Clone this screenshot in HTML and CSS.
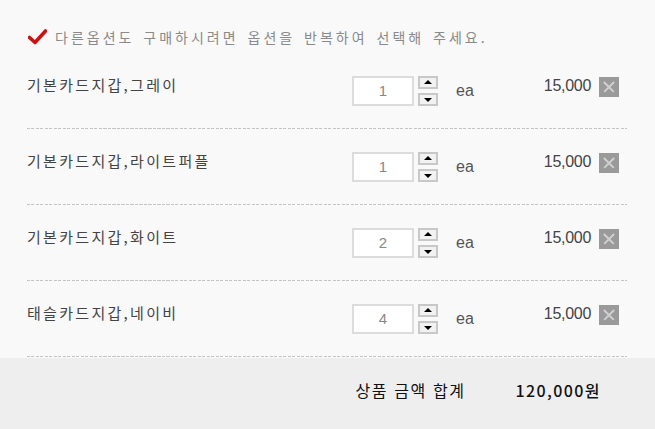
FILE: index.html
```html
<!DOCTYPE html>
<html lang="ko">
<head>
<meta charset="utf-8">
<link rel="stylesheet" href="styles.css">
</head>
<body>
<div class="page">
  <div class="notice">
    <svg class="check" width="19" height="16" viewBox="0 0 19 16"><path d="M1.5 8.5 L7 13.5 L17.5 2" fill="none" stroke="#cc1111" stroke-width="3.6" stroke-linecap="round" stroke-linejoin="round"/></svg>
    <span class="notice-text">다른옵션도 구매하시려면 옵션을 반복하여 선택해 주세요.</span>
  </div>
  <div class="list">
    <div class="row">
      <div class="name">기본카드지갑,그레이</div>
      <div class="qty">1</div>
      <div class="spin"><span class="btn up"></span><span class="btn down"></span></div>
      <div class="unit">ea</div>
      <div class="price">15,000</div>
      <div class="del"></div>
    </div>
    <div class="row">
      <div class="name">기본카드지갑,라이트퍼플</div>
      <div class="qty">1</div>
      <div class="spin"><span class="btn up"></span><span class="btn down"></span></div>
      <div class="unit">ea</div>
      <div class="price">15,000</div>
      <div class="del"></div>
    </div>
    <div class="row">
      <div class="name">기본카드지갑,화이트</div>
      <div class="qty">2</div>
      <div class="spin"><span class="btn up"></span><span class="btn down"></span></div>
      <div class="unit">ea</div>
      <div class="price">15,000</div>
      <div class="del"></div>
    </div>
    <div class="row">
      <div class="name">태슬카드지갑,네이비</div>
      <div class="qty">4</div>
      <div class="spin"><span class="btn up"></span><span class="btn down"></span></div>
      <div class="unit">ea</div>
      <div class="price">15,000</div>
      <div class="del"></div>
    </div>
  </div>
</div>
<div class="total">
  <span class="total-label">상품 금액 합계</span>
  <span class="total-value">120,000원</span>
</div>
</body>
</html>
```
FILE: styles.css
```css
html, body {
  margin: 0;
  padding: 0;
}
body {
  width: 655px;
  height: 429px;
  overflow: hidden;
  background: #f9f9f9;
  font-family: "Noto Sans CJK KR", "Noto Sans", sans-serif;
  color: #444;
}
.page {
  padding: 0 28px 0 27px;
}
.notice {
  height: 53px;
  box-sizing: border-box;
  padding-top: 28px;
  display: flex;
  align-items: flex-start;
}
.check {
  margin-left: 1px;
  margin-top: 1px;
  flex: 0 0 auto;
}
.notice-text {
  margin-left: 8px;
  font-size: 14px;
  line-height: 18px;
  letter-spacing: 3px;
  word-spacing: 2px;
  color: #8a8a8a;
}
.row {
  display: flex;
  align-items: flex-start;
  padding: 23px 0 23px;
  height: 30px;
  background-image: repeating-linear-gradient(to right, #c4c4c4 0 3px, transparent 3px 4.5px);
  background-size: 100% 1px;
  background-position: left bottom;
  background-repeat: no-repeat;
}
.name {
  flex: 0 0 325px;
  font-size: 15px;
  line-height: 18px;
  letter-spacing: 2.3px;
  color: #444;
}
.qty {
  box-sizing: border-box;
  width: 62px;
  height: 30px;
  border: 2px solid #dcdcdc;
  background: #fff;
  text-align: center;
  font-size: 15px;
  line-height: 26px;
  color: #888;
  font-family: "Liberation Sans", sans-serif;
}
.spin {
  margin-left: 4px;
  display: flex;
  flex-direction: column;
  gap: 4px;
}
.btn {
  box-sizing: border-box;
  width: 20px;
  height: 13px;
  border: 2px solid #c8c8c8;
  background: #f2f2f2;
  position: relative;
}
.btn::after {
  content: "";
  position: absolute;
  left: 4px;
  width: 0;
  height: 0;
  border-left: 4px solid transparent;
  border-right: 4px solid transparent;
}
.up::after {
  top: 2px;
  border-bottom: 4px solid #000;
}
.down::after {
  top: 3px;
  border-top: 4px solid #000;
}
.unit {
  margin-left: 18px;
  margin-top: 4px;
  font-family: "Liberation Sans", sans-serif;
  font-size: 16px;
  line-height: 22px;
  color: #555;
}
.price {
  margin-left: auto;
  margin-top: 1px;
  font-family: "Liberation Sans", sans-serif;
  font-size: 16px;
  line-height: 18px;
  letter-spacing: -0.3px;
  color: #444;
}
.del {
  margin-left: 8px;
  margin-right: 8px;
  margin-top: 1px;
  width: 20px;
  height: 20px;
  background: #9a9a9a;
  position: relative;
}
.del::before,
.del::after {
  content: "";
  position: absolute;
  left: 3px;
  top: 9px;
  width: 14px;
  height: 1.5px;
  background: #d0d0d0;
  transform: rotate(45deg);
}
.del::after {
  transform: rotate(-45deg);
}
.total {
  height: 72px;
  margin-top: 1px;
  background: #eeeeee;
  display: flex;
  justify-content: flex-end;
  align-items: flex-start;
  padding: 22px 54px 0 0;
  box-sizing: border-box;
  font-size: 16px;
  line-height: 20px;
  color: #111;
}
.total-label {
  letter-spacing: 1.6px;
}
.total-value {
  margin-left: 50px;
  font-weight: 500;
  letter-spacing: 1.4px;
}
```
